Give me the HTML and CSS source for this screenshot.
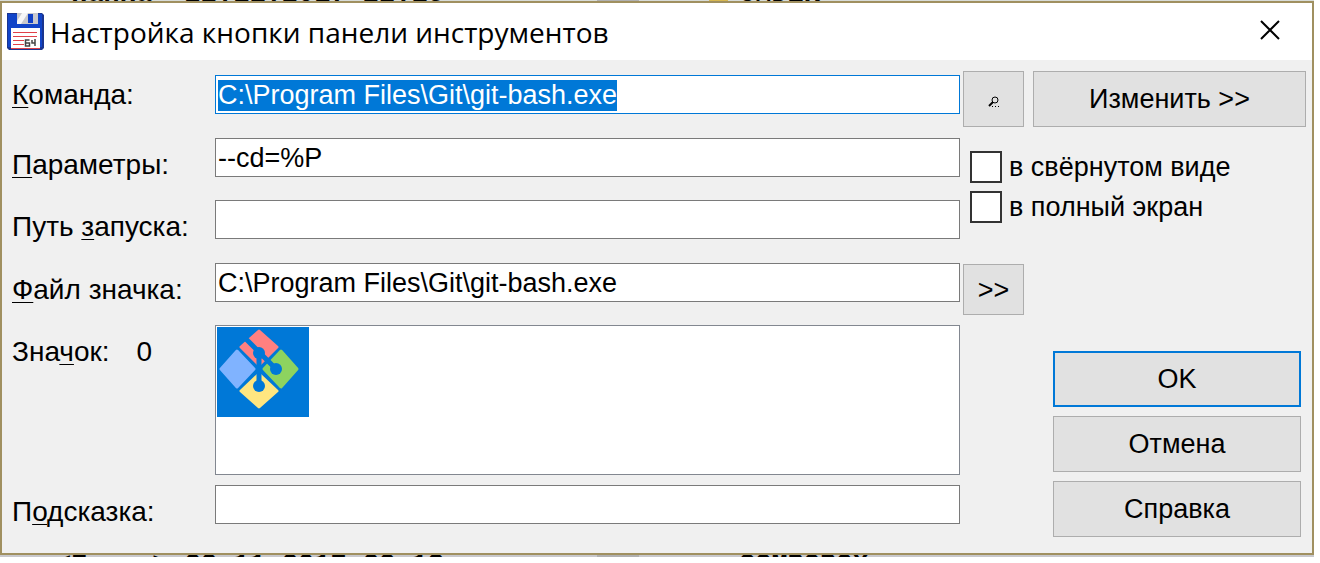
FILE: index.html
```html
<!DOCTYPE html>
<html lang="ru">
<head>
    <meta charset="UTF-8">
    <meta name="viewport" content="width=device-width, initial-scale=1.0">
    <title>Настройка кнопки панели инструментов</title>
    <link rel="stylesheet" href="styles.css">
</head>
<body>

    <div class="desktop">
        <!-- File list behind the dialog -->
        <div class="backdrop backdrop-top" aria-hidden="true">
            <span>&lt;Папка&gt; 22.11.2017 22:15</span>
            <i class="scrollbar"></i>
            <i class="folder"></i>
            <span>CMDER</span>
        </div>

        <div class="dialog" role="dialog" aria-labelledby="dialog-title">
            <header class="title-bar">
                <svg class="app-icon" viewBox="0 0 37 37" aria-hidden="true">
                    <path fill="#1a3590" d="M0 0h35l2 2v33l-2 2H2l-2-2z"/>
                    <path fill="#1144c8" d="M1 1h34v33H1z"/>
                    <path fill="#c9c9cd" d="M10 0h21v11H10z"/>
                    <path fill="#f7f7f7" d="M15 0h6l-7 11h-4V8z"/>
                    <path fill="#1040c8" d="M21 1h5v9h-5z"/>
                    <path fill="#fff" d="M4 15h29v21H4z"/>
                    <path stroke="#e04048" d="M6 19.500h24M6 23.500h24M6 27.500h11M6 31.500h11M4 35.500h29"/>
                    <path fill="none" stroke="#444" stroke-width="1.500" d="M22.500 27h-4v6h4v-3h-4M25 27v3h3M28 26v7"/>
                </svg>
                <h1 id="dialog-title">Настройка кнопки панели инструментов</h1>
                <button type="button" class="close-button" aria-label="Закрыть">
                    <svg viewBox="0 0 20 20" aria-hidden="true">
                        <path fill="none" stroke="#000" stroke-width="2" d="M1 1l18 18M19 1L1 19"/>
                    </svg>
                </button>
            </header>

            <form class="dialog-body">
                <div class="fields">
                    <label for="command" class="first"><u>К</u>оманда:</label>
                    <div class="text-field focused"><input type="text" id="command" value="C:\Program Files\Git\git-bash.exe"></div>

                    <label for="params"><u>П</u>араметры:</label>
                    <div class="text-field"><input type="text" id="params" value="--cd=%P"></div>

                    <label for="start-path">Путь <u>з</u>апуска:</label>
                    <div class="text-field"><input type="text" id="start-path"></div>

                    <label for="icon-file"><u>Ф</u>айл значка:</label>
                    <div class="text-field"><input type="text" id="icon-file" value="C:\Program Files\Git\git-bash.exe"></div>

                    <div class="icon-label"><span>Зна<u>ч</u>ок:</span><span>0</span></div>
                    <div class="icon-list">
                        <button type="button" class="icon-item" aria-label="Git Bash">
                            <svg viewBox="0 0 92 90" aria-hidden="true">
                                <g stroke-width="3" stroke-linejoin="round">
                                    <path fill="#ff8080" stroke="#ff8080" d="M42 4L60 20L42 38L24 20Z"/>
                                    <path fill="#80b3ff" stroke="#80b3ff" d="M20 24L37 42L20 60L4 42Z"/>
                                    <path fill="#8dd35f" stroke="#8dd35f" d="M64 24L80 42L64 60L47 42Z"/>
                                    <path fill="#ffe680" stroke="#ffe680" d="M42 47L60 64L42 80L24 64Z"/>
                                </g>
                                <path fill="none" stroke="#0078d7" stroke-width="5" d="M28 11L42 25V59M42 25L59 42"/>
                                <circle cx="42" cy="26" r="6" fill="#0078d7"/>
                                <circle cx="42" cy="59" r="6" fill="#0078d7"/>
                                <circle cx="59" cy="42" r="6" fill="#0078d7"/>
                            </svg>
                        </button>
                    </div>

                    <label for="tooltip">П<u>о</u>дсказка:</label>
                    <div class="text-field"><input type="text" id="tooltip"></div>
                </div>

                <div class="side">
                    <div class="command-buttons">
                        <button type="button" class="button" aria-label="Обзор">
                            <svg class="search-icon" viewBox="0 0 12 12" aria-hidden="true">
                                <circle cx="7" cy="4" r="3" fill="none" stroke="#000"/>
                                <path stroke="#000" stroke-width="2" d="M5 6L1 10"/>
                                <path stroke="#000" d="M4 10.500h1M7 10.500h1M10 10.500h1"/>
                            </svg>
                        </button>
                        <button type="button" class="button">Изменить &gt;&gt;</button>
                    </div>
                    <div class="options">
                        <label><input type="checkbox"> в свёрнутом виде</label>
                        <label><input type="checkbox"> в полный экран</label>
                    </div>
                    <button type="button" class="button choose-icon">&gt;&gt;</button>
                    <div class="actions">
                        <button type="submit" class="button default">OK</button>
                        <button type="button" class="button">Отмена</button>
                        <button type="button" class="button">Справка</button>
                    </div>
                </div>
            </form>
        </div>

        <div class="backdrop backdrop-bottom" aria-hidden="true">
            <span>&lt;Папка&gt; 22.11.2017 22:13</span>
            <i class="scrollbar"></i>
            <i></i>
            <span>COMBOBOX</span>
        </div>
    </div>

    <script>
        const command = document.getElementById('command');
        command.focus();
        command.select();
    </script>

</body>
</html>
```

FILE: styles.css
```css
* {
    margin: 0;
    padding: 0;
    box-sizing: border-box;
}

body {
    background-color: #fff;
    color: #000;
    font-family: "Liberation Sans", Arial, sans-serif;
    font-size: 27px;
    line-height: 30px;
}

.desktop {
    margin-right: 6px;
}

/* Only a sliver of the file list shows around the dialog */
.backdrop {
    display: grid;
    grid-template-columns: 542px 42px 100px 1fr;
    padding-left: 55px;
    overflow: hidden;
    font-family: "Liberation Mono", monospace;
    font-weight: 700;
    white-space: nowrap;
}

.backdrop-top {
    height: 1px;
    align-content: end;
    background-color: #d8dcd8;
    line-height: 14px;
}

.backdrop-bottom {
    height: 2px;
    align-content: start;
    background-color: #c8c8cc;
    line-height: 20px;
}

.scrollbar {
    background-color: #b0b0b0;
}

.folder {
    width: 19px;
    margin-left: 70px;
    background-color: #d8b850;
}

.dialog {
    border: 2px solid #a09060;
    background-color: #f0f0f0;
}

/* Title bar */
.title-bar {
    display: flex;
    align-items: center;
    height: 57px;
    padding: 0 32px 0 5px;
    background-color: #fff;
}

.app-icon {
    width: 37px;
    height: 37px;
    margin-right: 6px;
}

h1 {
    flex: 1;
    font-family: "Open Sans", sans-serif;
    font-size: 28px;
    font-weight: 400;
    line-height: 36px;
}

.close-button {
    width: 20px;
    height: 20px;
    margin-bottom: 4px;
    border: none;
    background: none;
}

.close-button svg {
    display: block;
}

button,
input {
    color: inherit;
    font: inherit;
}

u {
    text-decoration-thickness: 1px;
    text-underline-offset: 3px;
}

/* Form */
.dialog-body {
    display: grid;
    grid-template-columns: 1fr 343px;
    gap: 3px;
    padding: 11px 6px 16px 10px;
}

.fields {
    display: grid;
    grid-template-columns: 203px 1fr;
    grid-template-rows: 63px 62px 63px 62px 160px 39px;
    align-content: start;
    align-items: start;
    padding-top: 4px;
}

.text-field {
    height: 39px;
    padding: 2px;
    border: 1px solid #7a7a7a;
    background-color: #fff;
}

.text-field.focused {
    border-color: #0078d7;
}

.text-field input {
    display: block;
    width: 100%;
    height: 34px;
    border: none;
    outline: none;
    background: none;
}

.text-field input::selection {
    background-color: #0078d7;
    color: #fff;
}

.fields > label,
.icon-label {
    padding-top: 12px;
    font-size: 28px;
}

.fields > label.first {
    padding-top: 5px;
}

.icon-label {
    display: flex;
    gap: 27px;
}

.icon-list {
    height: 150px;
    padding: 1px;
    border: 1px solid #828790;
    background-color: #fff;
}

.icon-item {
    display: block;
    width: 92px;
    height: 90px;
    border: none;
    background-color: #0078d7;
}

.icon-item svg {
    display: block;
}

/* Buttons */
.side {
    display: flex;
    flex-direction: column;
}

.button {
    height: 56px;
    border: 1px solid #adadad;
    background-color: #e1e1e1;
}

.button.default {
    border: 2px solid #0078d7;
}

.command-buttons {
    display: grid;
    grid-template-columns: 61px 1fr;
    gap: 9px;
}

.search-icon {
    width: 12px;
    height: 12px;
}

.options {
    margin-top: 20px;
    padding-left: 7px;
}

.options label {
    display: flex;
    align-items: center;
    gap: 7px;
    height: 40px;
}

.options input {
    appearance: none;
    width: 32px;
    height: 32px;
    border: 2px solid #333;
    background-color: #fff;
}

.choose-icon {
    width: 61px;
    height: 51px;
    margin-top: 37px;
}

.actions {
    display: grid;
    gap: 9px;
    margin: 36px 5px 0 90px;
}
```
